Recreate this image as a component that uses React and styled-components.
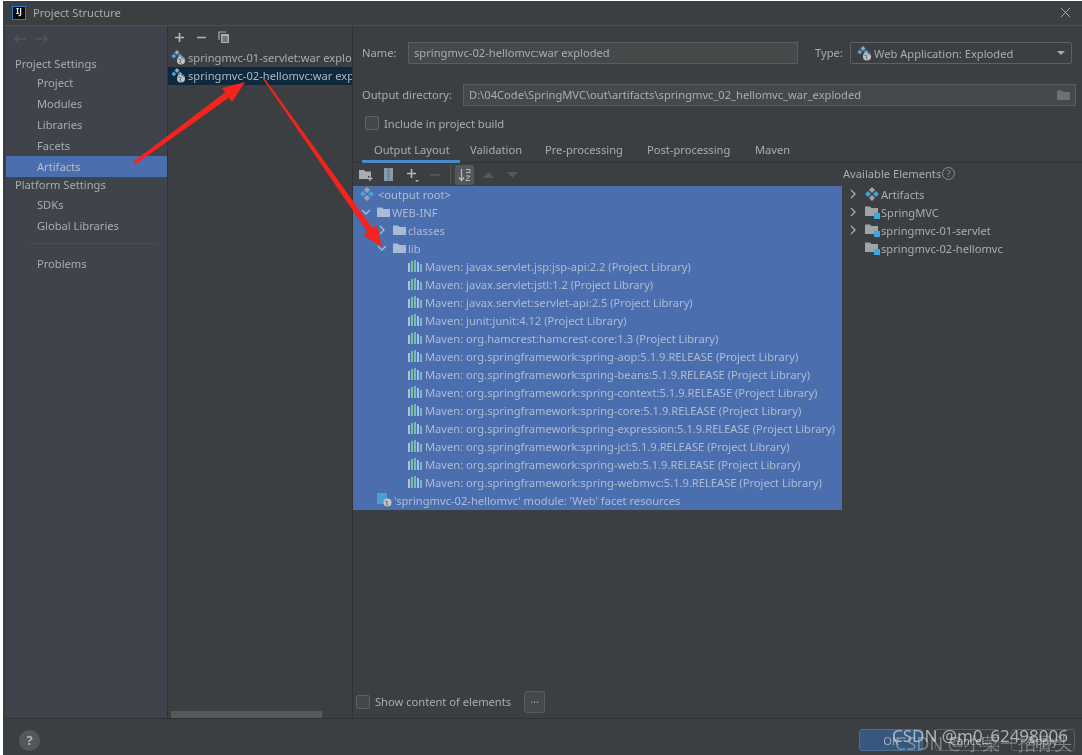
import React from "react";
import styled, { createGlobalStyle } from "styled-components";

const GlobalStyle = createGlobalStyle`
  html, body {
    margin: 0;
    padding: 0;
    background: #ffffff;
  }
  * {
    box-sizing: border-box;
  }
  svg {
    flex: none;
  }
`;

const Page = styled.div`
  position: relative;
  width: 1082px;
  height: 755px;
  padding: 1px 0 0 3px;
  overflow: hidden;
  font-family: "Noto Sans", sans-serif;
  font-size: 11.15px;
  color: #a9adb0;
`;

const Dialog = styled.div`
  height: 754px;
  display: flex;
  flex-direction: column;
  background: #3c3f41;
  filter: blur(0.35px);
`;

const TitleBar = styled.div`
  height: 25px;
  flex: none;
  display: flex;
  align-items: center;
  gap: 7px;
  padding: 0 9px 1px;
  border-bottom: 1px solid #4c4f51;
`;

const AppLogo = styled.div`
  width: 14px;
  height: 14px;
  background: #0a0a0a;
  border: 1px solid #1f7fd6;
  color: #eee;
  font-size: 8px;
  line-height: 8px;
  font-weight: 700;
  text-align: center;
`;

const CloseButton = styled.div`
  margin-left: auto;
  margin-right: 2px;
  display: flex;
`;

const Body = styled.div`
  flex: 1;
  min-height: 0;
  display: flex;
  padding-left: 3px;
  border-bottom: 1px solid #323232;
`;

const Sidebar = styled.nav`
  width: 162px;
  flex: none;
  background: #3e434c;
  border-right: 1px solid #323232;
`;

const NavArrows = styled.div`
  height: 26px;
  display: flex;
  align-items: center;
  gap: 10px;
  padding: 0 7px;
`;

const SectionTitle = styled.div`
  height: ${(p) => p.$h}px;
  line-height: ${(p) => p.$line}px;
  padding-left: 9px;
`;

const NavItem = styled.div`
  height: 21px;
  line-height: 21px;
  padding-left: 31px;
  background: ${(p) => (p.$active ? "#4b6eaf" : "transparent")};
  color: ${(p) => (p.$active ? "#b4bfd0" : "inherit")};
`;

const NavDivider = styled.div`
  height: 1px;
  margin: 7px 10px 9px 25px;
  background: #474c55;
`;

const ListPane = styled.div`
  position: relative;
  width: 185px;
  flex: none;
  border-right: 1px solid #323232;
  overflow: hidden;
`;

const ListToolbar = styled.div`
  height: 23px;
  display: flex;
  align-items: center;
  gap: 11px;
  padding: 0 0 0 6px;
`;

const ArtifactRow = styled.div`
  height: 18px;
  display: flex;
  align-items: center;
  gap: 2px;
  padding: 0 0 2px 3px;
  white-space: nowrap;
  background: ${(p) => (p.$selected ? "#0d293e" : "transparent")};
  color: ${(p) => (p.$selected ? "#b3b8bc" : "inherit")};
`;

const ListScrollbar = styled.div`
  position: absolute;
  left: 3px;
  bottom: 0;
  width: 151px;
  height: 7px;
  background: #565859;
`;

const Main = styled.main`
  flex: 1;
  min-width: 0;
  display: flex;
  flex-direction: column;
`;

const FormRow = styled.div`
  display: flex;
  align-items: center;
  height: 22px;
  margin-top: ${(p) => p.$top}px;
  padding-left: ${(p) => p.$left || 9}px;
`;

const FieldLabel = styled.label`
  width: ${(p) => p.$w}px;
  flex: none;
  padding-left: ${(p) => p.$pad || 0}px;
  padding-bottom: 1px;
`;

const TextField = styled.div`
  width: ${(p) => p.$w}px;
  height: 22px;
  flex: none;
  display: flex;
  align-items: center;
  justify-content: space-between;
  padding: 0 5px 1px;
  background: #45494a;
  border: 1px solid #5a5d5e;
`;

const SelectField = styled(TextField)`
  background: #3c3f41;
  border-color: #5e6163;
  border-radius: 2px;
  padding: 0 6px;
`;

const SelectValue = styled.span`
  display: flex;
  align-items: center;
  gap: 2px;
`;

const CaretDown = styled.span`
  width: 0;
  height: 0;
  border-left: 4px solid transparent;
  border-right: 4px solid transparent;
  border-top: 4px solid #a9adb0;
`;

const CheckBox = styled.span`
  width: 14px;
  height: 14px;
  flex: none;
  margin-right: 5px;
  background: #43494a;
  border: 1px solid #5f6264;
  border-radius: 2px;
`;

const Tabs = styled.div`
  height: 23px;
  margin-top: 6px;
  flex: none;
  display: flex;
  padding-left: 9px;
  border-bottom: 1px solid #323232;
`;

const Tab = styled.div`
  width: ${(p) => p.$w}px;
  height: ${(p) => (p.$active ? "23px" : "21px")};
  padding-left: ${(p) => p.$pad}px;
  line-height: 20px;
  border-bottom: ${(p) => (p.$active ? "3px solid #4a88c7" : "none")};
`;

const LayoutArea = styled.div`
  flex: 1;
  min-height: 0;
  display: flex;
`;

const LeftColumn = styled.div`
  width: 489px;
  flex: none;
  display: flex;
  flex-direction: column;
`;

const Toolbar = styled.div`
  height: 23px;
  flex: none;
  display: flex;
  align-items: center;
  padding-left: 6px;
`;

const ToolIcon = styled.span`
  width: ${(p) => p.$w}px;
  height: 20px;
  display: flex;
  align-items: center;
  justify-content: center;
  flex: none;
  border-radius: 2px;
  background: ${(p) => (p.$active ? "#55585a" : "transparent")};
`;

const ToolSeparator = styled.span`
  width: 1px;
  height: 19px;
  margin: 0 4px 0 3px;
  background: #515456;
`;

const TreePanel = styled.div`
  height: 324px;
  flex: none;
  background: #4b6eaf;
  color: #aebcd3;
`;

const TreeRow = styled.div`
  height: 18px;
  display: flex;
  align-items: center;
  gap: 2px;
  padding: 0 0 2px ${(p) => p.$indent}px;
  white-space: nowrap;
`;

const RootLabel = styled.span`
  margin-left: 2px;
`;

const Chevron = styled.span`
  width: 11px;
  height: 11px;
  flex: none;
  margin-right: ${(p) => p.$gap}px;
  display: flex;
  align-items: center;
  justify-content: center;
`;

const BottomBar = styled.div`
  margin-top: auto;
  height: 28px;
  display: flex;
  align-items: center;
  padding: 0 0 5px 3px;
`;

const EllipsisButton = styled.button`
  width: 21px;
  height: 22px;
  margin-left: 13px;
  padding: 0 0 5px;
  background: #45494b;
  border: 1px solid #5a5d5f;
  border-radius: 3px;
  color: #b0b3b5;
  font: inherit;
  font-size: 10px;
`;

const RightColumn = styled.div`
  flex: 1;
  min-width: 0;
`;

const AvailableHeader = styled.div`
  height: 23px;
  display: flex;
  align-items: center;
  gap: 1px;
  padding: 0 0 3px 1px;
`;

const HelpDot = styled.span`
  width: 13px;
  height: 13px;
  border: 1px solid #8a8d8f;
  border-radius: 50%;
  color: #8a8d8f;
  font-size: 9px;
  line-height: 11px;
  text-align: center;
`;

const ElementRow = styled.div`
  height: 18px;
  display: flex;
  align-items: center;
  padding: 0 0 2px 5px;
  white-space: nowrap;
`;

const ElementIcon = styled.span`
  width: 16px;
  flex: none;
  display: flex;
`;

const Footer = styled.div`
  height: 36px;
  flex: none;
  display: flex;
  align-items: center;
  padding: 6px 7px 0 16px;
`;

const HelpButton = styled.div`
  width: 21px;
  height: 21px;
  border-radius: 50%;
  background: #55585a;
  color: #b0b3b5;
  font-size: 13px;
  font-weight: 700;
  line-height: 21px;
  text-align: center;
`;

const FooterActions = styled.div`
  margin-left: auto;
  display: flex;
  gap: 12px;
`;

const ActionButton = styled.button`
  width: 64px;
  height: 22px;
  padding: 0;
  border-radius: 3px;
  font: inherit;
  color: #a9adb0;
  background: ${(p) => (p.$primary ? "#365880" : "#3c3f41")};
  border: 1px solid ${(p) => (p.$primary ? "#4c708c" : "#5e6163")};
`;

const Annotations = styled.svg`
  position: absolute;
  left: 0;
  top: 0;
  pointer-events: none;
`;

const Watermark = styled.div`
  position: absolute;
  right: ${(p) => p.$right}px;
  top: ${(p) => p.$top}px;
  font-size: ${(p) => p.$size}px;
  line-height: 20px;
  white-space: nowrap;
  color: ${(p) => p.$color};
  filter: blur(0.4px);
  pointer-events: none;
`;

const FolderIcon = ({ color = "#a9bcd6" }) => (
  <svg width="13" height="12" viewBox="0 0 13 12">
    <path d="M0 1.500h5l1.500 1.500H13v8H0z" fill={color} />
  </svg>
);

const ModuleIcon = () => (
  <svg width="16" height="14" viewBox="0 0 16 14">
    <path d="M0 1.500h5l1.500 1.500H13v8H0z" fill="#9ea3a7" />
    <rect x="9" y="8" width="6" height="6" fill="#3ea8de" />
  </svg>
);

const ArtifactsIcon = () => (
  <svg width="14" height="14" viewBox="0 0 14 14">
    <path d="M7 0l3 3-3 3-3-3z" fill="#9ea3a7" />
    <path d="M3 4l3 3-3 3-3-3z" fill="#40a4dc" />
    <path d="M11 4l3 3-3 3-3-3z" fill="#40a4dc" />
    <path d="M7 8l3 3-3 3-3-3z" fill="#9ea3a7" />
  </svg>
);

const WarIcon = () => (
  <svg width="15" height="15" viewBox="0 0 15 15">
    <path d="M6 0l2.500 2.500L6 5 3.500 2.500z" fill="#9ea3a7" />
    <path d="M2.800 3.400l2.500 2.500-2.500 2.500L.3 5.900z" fill="#40a4dc" />
    <path d="M9 3.400l2.500 2.500L9 8.400 6.500 5.900z" fill="#40a4dc" />
    <circle cx="10" cy="10.500" r="4" fill="#c3c6c8" />
    <path d="M7.500 9.500c2-1 3 .5 2 1.500s0 2 1 2.500M10.500 7c0 1 2 1 3 2" stroke="#4a4d4f" fill="none" strokeWidth="1" />
  </svg>
);

const FacetIcon = () => (
  <svg width="15" height="14" viewBox="0 0 15 14">
    <rect x="0" y="0" width="10" height="11" fill="#4a9ed8" />
    <circle cx="10.500" cy="9.500" r="4" fill="#c3c6c8" />
    <path d="M8.500 8.500c1.500-.5 2.500.5 1.500 1.500s0 2 1 2.500" stroke="#4a4d4f" fill="none" />
  </svg>
);

const LibraryIcon = () => (
  <svg width="15" height="12" viewBox="0 0 15 12">
    <rect x="0" y="3" width="2" height="9" fill="#a9c3dc" />
    <rect x="3" y="1" width="2" height="11" fill="#8cc06e" />
    <rect x="6" y="0" width="2" height="12" fill="#6fb6e0" />
    <rect x="9" y="2" width="2" height="10" fill="#a9c3dc" />
    <rect x="12" y="4" width="2" height="8" fill="#6fb6e0" />
  </svg>
);

const ChevronIcon = ({ open, color = "#a9bcd6" }) => (
  <svg width="10" height="10" viewBox="0 0 10 10">
    <path
      d={open ? "M1 3l4 4 4-4" : "M3 1l4 4-4 4"}
      fill="none"
      stroke={color}
      strokeWidth="1.300"
    />
  </svg>
);

const MAVEN_LIBRARIES = [
  "javax.servlet.jsp:jsp-api:2.2",
  "javax.servlet:jstl:1.2",
  "javax.servlet:servlet-api:2.5",
  "junit:junit:4.12",
  "org.hamcrest:hamcrest-core:1.3",
  "org.springframework:spring-aop:5.1.9.RELEASE",
  "org.springframework:spring-beans:5.1.9.RELEASE",
  "org.springframework:spring-context:5.1.9.RELEASE",
  "org.springframework:spring-core:5.1.9.RELEASE",
  "org.springframework:spring-expression:5.1.9.RELEASE",
  "org.springframework:spring-jcl:5.1.9.RELEASE",
  "org.springframework:spring-web:5.1.9.RELEASE",
  "org.springframework:spring-webmvc:5.1.9.RELEASE",
];

const App = () => (
  <Page>
    <GlobalStyle />
    <Dialog>
      <TitleBar>
        <AppLogo>IJ</AppLogo>
        <span>Project Structure</span>
        <CloseButton>
          <svg width="11" height="11" viewBox="0 0 11 11">
            <path d="M1 1l9 9M10 1l-9 9" stroke="#a9adb0" strokeWidth="1" />
          </svg>
        </CloseButton>
      </TitleBar>
      <Body>
        <Sidebar>
          <NavArrows>
            <svg width="13" height="10" viewBox="0 0 13 10">
              <path d="M13 5H2M6 1L2 5l4 4" fill="none" stroke="#54585c" strokeWidth="1.500" />
            </svg>
            <svg width="13" height="10" viewBox="0 0 13 10">
              <path d="M0 5h11M7 1l4 4-4 4" fill="none" stroke="#54585c" strokeWidth="1.500" />
            </svg>
          </NavArrows>
          <SectionTitle $h={20} $line={24}>Project Settings</SectionTitle>
          <NavItem>Project</NavItem>
          <NavItem>Modules</NavItem>
          <NavItem>Libraries</NavItem>
          <NavItem>Facets</NavItem>
          <NavItem $active>Artifacts</NavItem>
          <SectionTitle $h={17} $line={16}>Platform Settings</SectionTitle>
          <NavItem>SDKs</NavItem>
          <NavItem>Global Libraries</NavItem>
          <NavDivider />
          <NavItem>Problems</NavItem>
        </Sidebar>
        <ListPane>
          <ListToolbar>
            <svg width="11" height="11" viewBox="0 0 11 11">
              <path d="M5.500 1v9M1 5.500h9" stroke="#b6b9bb" strokeWidth="1.600" />
            </svg>
            <svg width="11" height="11" viewBox="0 0 11 11">
              <path d="M1 5.500h9" stroke="#a9adb0" strokeWidth="1.600" />
            </svg>
            <svg width="12" height="13" viewBox="0 0 12 13">
              <path d="M1 9V1h7" fill="none" stroke="#a9adb0" strokeWidth="1.200" />
              <rect x="3" y="3" width="8" height="9" fill="#a9adb0" />
              <path d="M4.500 6h5M4.500 8h5M4.500 10h5" stroke="#3c3f41" />
            </svg>
          </ListToolbar>
          <ArtifactRow>
            <WarIcon />
            springmvc-01-servlet:war exploded
          </ArtifactRow>
          <ArtifactRow $selected>
            <WarIcon />
            springmvc-02-hellomvc:war exploded
          </ArtifactRow>
          <ListScrollbar />
        </ListPane>
        <Main>
          <FormRow $top={16}>
            <FieldLabel $w={46}>Name:</FieldLabel>
            <TextField $w={390}>springmvc-02-hellomvc:war exploded</TextField>
            <FieldLabel $w={52} $pad={17}>Type:</FieldLabel>
            <SelectField $w={222}>
              <SelectValue>
                <WarIcon />
                Web Application: Exploded
              </SelectValue>
              <CaretDown />
            </SelectField>
          </FormRow>
          <FormRow $top={20}>
            <FieldLabel $w={101}>Output directory:</FieldLabel>
            <TextField $w={613}>
              D:\04Code\SpringMVC\out\artifacts\springmvc_02_hellomvc_war_exploded
              <FolderIcon color="#6e7173" />
            </TextField>
          </FormRow>
          <FormRow $top={6} $left={12}>
            <CheckBox />
            Include in project build
          </FormRow>
          <Tabs>
            <Tab $active $w={98} $pad={12}>Output Layout</Tab>
            <Tab $w={75} $pad={10}>Validation</Tab>
            <Tab $w={102} $pad={10}>Pre-processing</Tab>
            <Tab $w={108} $pad={10}>Post-processing</Tab>
            <Tab $w={60} $pad={10}>Maven</Tab>
          </Tabs>
          <LayoutArea>
            <LeftColumn>
              <Toolbar>
                <ToolIcon $w={14}>
                  <svg width="14" height="12" viewBox="0 0 14 12">
                    <path d="M0 1h5l1.500 1.500H12V7H9v3H0z" fill="#a9adb0" />
                    <path d="M11 7v5M8.500 9.500h5" stroke="#b6b9bb" strokeWidth="1.300" />
                  </svg>
                </ToolIcon>
                <ToolIcon $w={30}>
                  <svg width="9" height="13" viewBox="0 0 9 13">
                    <rect width="9" height="13" fill="#8a9aa6" />
                    <path d="M4.500 0v13" stroke="#3f7fa8" strokeWidth="2" strokeDasharray="1.500 1" />
                  </svg>
                </ToolIcon>
                <ToolIcon $w={20}>
                  <svg width="14" height="14" viewBox="0 0 14 14">
                    <path d="M5.500 1v9M1 5.500h9" stroke="#b6b9bb" strokeWidth="1.600" />
                    <path d="M9 12h4l-2 2z" fill="#b6b9bb" />
                  </svg>
                </ToolIcon>
                <ToolIcon $w={24}>
                  <svg width="10" height="10" viewBox="0 0 10 10">
                    <path d="M0 5h10" stroke="#585b5d" strokeWidth="1.500" />
                  </svg>
                </ToolIcon>
                <ToolSeparator />
                <ToolIcon $w={19} $active>
                  <svg width="14" height="14" viewBox="0 0 14 14">
                    <path d="M3.500 1v11M1 9.500l2.500 3 2.500-3" fill="none" stroke="#b6b9bb" strokeWidth="1.300" />
                    <path d="M8 1.500h4v3H8M8 8h4l-4 4.500h4" fill="none" stroke="#b6b9bb" strokeWidth="1" />
                  </svg>
                </ToolIcon>
                <ToolIcon $w={28}>
                  <svg width="11" height="6" viewBox="0 0 11 6">
                    <path d="M5.500 0L11 6H0z" fill="#54585a" />
                  </svg>
                </ToolIcon>
                <ToolIcon $w={20}>
                  <svg width="11" height="6" viewBox="0 0 11 6">
                    <path d="M5.500 6L11 0H0z" fill="#54585a" />
                  </svg>
                </ToolIcon>
              </Toolbar>
              <TreePanel>
                <TreeRow $indent={7}>
                  <ArtifactsIcon />
                  <RootLabel>&lt;output root&gt;</RootLabel>
                </TreeRow>
                <TreeRow $indent={7}>
                  <Chevron $gap={4}><ChevronIcon open /></Chevron>
                  <FolderIcon />
                  <span>WEB-INF</span>
                </TreeRow>
                <TreeRow $indent={23}>
                  <Chevron $gap={4}><ChevronIcon /></Chevron>
                  <FolderIcon />
                  <span>classes</span>
                </TreeRow>
                <TreeRow $indent={23}>
                  <Chevron $gap={4}><ChevronIcon open /></Chevron>
                  <FolderIcon />
                  <span>lib</span>
                </TreeRow>
                {MAVEN_LIBRARIES.map((lib) => (
                  <TreeRow key={lib} $indent={55}>
                    <LibraryIcon />
                    <span>Maven: {lib} (Project Library)</span>
                  </TreeRow>
                ))}
                <TreeRow $indent={24}>
                  <FacetIcon />
                  <span>'springmvc-02-hellomvc' module: 'Web' facet resources</span>
                </TreeRow>
              </TreePanel>
              <BottomBar>
                <CheckBox />
                Show content of elements
                <EllipsisButton>...</EllipsisButton>
              </BottomBar>
            </LeftColumn>
            <RightColumn>
              <AvailableHeader>
                Available Elements
                <HelpDot>?</HelpDot>
              </AvailableHeader>
              <ElementRow>
                <Chevron $gap={7}><ChevronIcon color="#a9adb0" /></Chevron>
                <ElementIcon><ArtifactsIcon /></ElementIcon>
                Artifacts
              </ElementRow>
              <ElementRow>
                <Chevron $gap={7}><ChevronIcon color="#a9adb0" /></Chevron>
                <ElementIcon><ModuleIcon /></ElementIcon>
                SpringMVC
              </ElementRow>
              <ElementRow>
                <Chevron $gap={7}><ChevronIcon color="#a9adb0" /></Chevron>
                <ElementIcon><ModuleIcon /></ElementIcon>
                springmvc-01-servlet
              </ElementRow>
              <ElementRow>
                <Chevron $gap={7} />
                <ElementIcon><ModuleIcon /></ElementIcon>
                springmvc-02-hellomvc
              </ElementRow>
            </RightColumn>
          </LayoutArea>
        </Main>
      </Body>
      <Footer>
        <HelpButton>?</HelpButton>
        <FooterActions>
          <ActionButton $primary>OK</ActionButton>
          <ActionButton>Cancel</ActionButton>
          <ActionButton>Apply</ActionButton>
        </FooterActions>
      </Footer>
    </Dialog>
    <Annotations width="1082" height="755" viewBox="0 0 1082 755">
      <polygon points="133,162 225,92.600 222,88 245,82 232,102 229,97.500 136,164" fill="#f5231c" />
      <polygon points="263,79 367.600,232 363,235 382,247 377,225 372.400,228 265,79" fill="#f5231c" />
    </Annotations>
    <Watermark $top={733} $right={10} $size={18} $color="rgba(190,195,198,0.5)">CSDN @小菜一招骨头</Watermark>
    <Watermark $top={726} $right={14} $size={17} $color="rgba(210,214,216,0.75)">CSDN @m0_62498006</Watermark>
  </Page>
);

export default App;
